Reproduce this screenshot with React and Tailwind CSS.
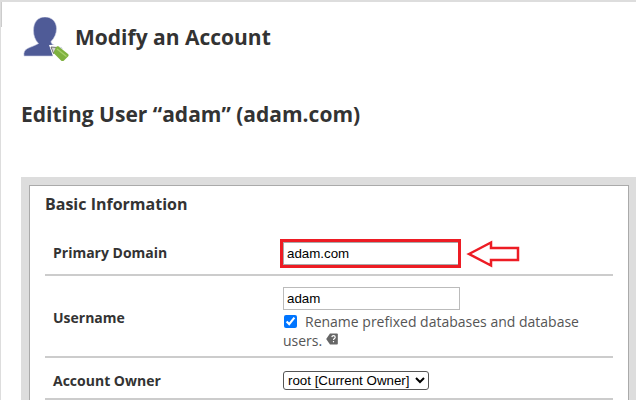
import React from "react";

const UserIcon = () => (
  <svg width="46" height="44" viewBox="0 0 46 44" className="shrink-0">
    <path
      d="M22 0c7 0 11.500 5 11.500 11.500 0 5-2 9.500-5.500 13 0 2.500 2.500 3.500 6 4.500l5 2 1 8H1c-.5-3.500 .5-6 3.500-7.500 3.500-1.800 7-2.500 11-5-3.500-3.500-5-8-5-13C10.500 5 15 0 22 0z"
      fill="#4f5b97"
      stroke="#c9cde2"
      strokeWidth=".6"
    />
    <path d="M26 28l8-.5 12 10-7 7H31l-1-5z" fill="#fff" />
    <path d="M28 30l6 .5-3.500 6z" fill="#d5d5d5" stroke="#555" strokeWidth=".8" />
    <path d="M33 30l2-1 10 8c.8.800.8 1.500 0 2.500l-4 4c-1 1-2 1-3 0L30.500 36z" fill="#7fb13f" />
    <path d="M34 32l9.500 7.500" stroke="#a5cf68" strokeWidth="1.500" fill="none" />
  </svg>
);

const HelpTag = () => (
  <svg width="12" height="12" viewBox="0 0 12 12" className="inline-block ml-[4px] align-[1px]">
    <path d="M4 .5h7a.8.8 0 0 1 .8.8v9.400a.8.8 0 0 1-.8.8H4L.2 6z" fill="#666" />
    <path d="M5.800 4.200c.2-1 .9-1.500 1.700-1.500 1 0 1.700.6 1.700 1.500 0 1.300-1.700 1.300-1.700 2.800" fill="none" stroke="#fff" strokeWidth="1.200" />
    <path d="M6.900 8h1.200v1.300H6.900z" fill="#fff" />
  </svg>
);

const Row = ({ label, labelClass = "", rowClass = "", children }) => (
  <div className={`flex items-center border-b-2 border-[#ccc] ${rowClass}`}>
    <div className={`w-[238px] pl-2 shrink-0 text-[14px] font-bold text-[#333] ${labelClass}`}>{label}</div>
    <div className="flex-1">{children}</div>
  </div>
);

export default function App() {
  return (
    <div className="relative w-[636px] h-[400px] overflow-hidden bg-white border-t-2 border-l border-[#ddd] font-['Open_Sans',sans-serif] text-[#333]">
      <span className="absolute left-[-1px] top-0 w-[2px] h-[25px] bg-[#ccc]" />

      <div className="flex items-start pl-[22px] pt-[15px] h-[60px]">
        <UserIcon />
        <h1 className="ml-[6px] mt-[5px] text-[21px] leading-[30px] font-bold">Modify an Account</h1>
      </div>

      <h2 className="ml-[20px] mt-[38px] text-[21px] leading-[28px] font-bold">
        Editing User “adam” (adam.com)
      </h2>

      <div className="ml-[20px] mt-[49px] bg-[#ddd] pt-2 pl-2 pr-[7px] pb-8">
        <div className="border border-[#aaa] bg-white pl-[15px] pr-[15px]">
          <div className="pt-[7px] pb-[16px] text-[16px] leading-[22px] font-bold">Basic Information</div>

          <Row label="Primary Domain">
            <div className="relative h-[43px] pt-[11px]">
              <div className="flex items-center w-[177px] h-[23px] border border-[#aaa] pl-[3px] font-['Liberation_Sans',sans-serif] text-[13.33px] text-black">
                adam.com
              </div>
              <div className="absolute left-[-3px] top-[8px] w-[181px] h-[29px] border-[3px] border-[#ed1c24]" />
              <svg width="54" height="32" viewBox="0 0 54 32" className="absolute left-[183px] top-[7px]">
                <path d="M3 16L25 4.500v5.500h27v12H25v5.500z" fill="#fff" stroke="#ed1c24" strokeWidth="2.500" />
              </svg>
            </div>
          </Row>

          <Row label="Username" labelClass="mt-[3px]">
            <div className="pt-[11px] pb-[6px]">
              <input
                readOnly
                value="adam"
                className="block w-[177px] h-[23px] border border-[#bbb] pl-[3px] font-['Liberation_Sans',sans-serif] text-[13.33px] text-black outline-none"
              />
              <div className="mt-[2px] pr-[20px] text-[14px] leading-[19px] text-[#555]">
                <input type="checkbox" checked readOnly className="w-[13px] h-[13px] ml-[1px] mr-[8px] align-[-1px] accent-[#0075ff]" />
                Rename prefixed databases and database users.
                <HelpTag />
              </div>
            </div>
          </Row>

          <Row label="Account Owner" rowClass="h-[42px] pt-[5px]">
            <select className="block w-[146px] h-[19px] border border-[#555] rounded-[3px] font-['Liberation_Sans',sans-serif] text-[13.33px] text-black">
              <option>root [Current Owner]</option>
            </select>
          </Row>
        </div>
      </div>
    </div>
  );
}
